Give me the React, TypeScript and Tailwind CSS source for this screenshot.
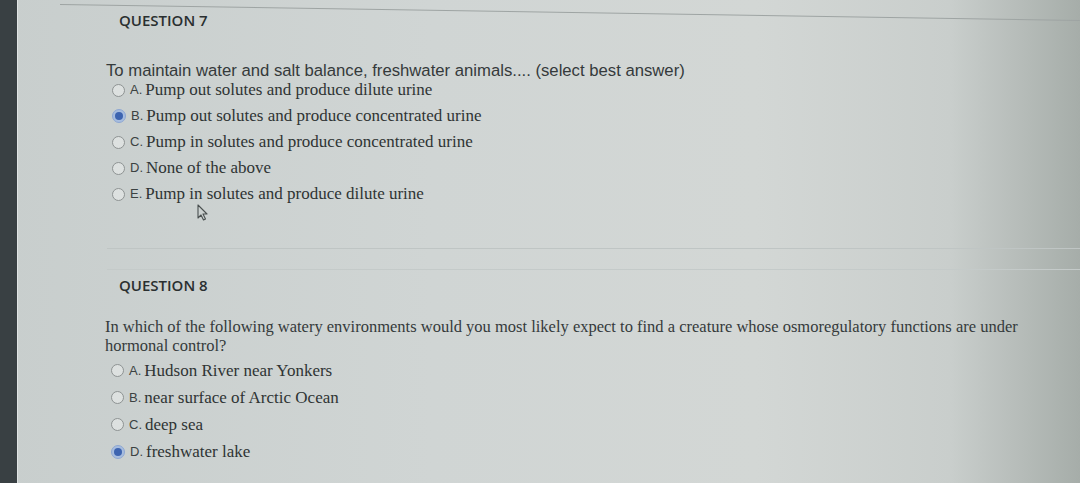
import React from "react";

type Opt = { letter: string; text: string; checked?: boolean };

const Q7_OPTS: Opt[] = [
  { letter: "A.", text: "Pump out solutes and produce dilute urine" },
  { letter: "B.", text: "Pump out solutes and produce concentrated urine", checked: true },
  { letter: "C.", text: "Pump in solutes and produce concentrated urine" },
  { letter: "D.", text: "None of the above" },
  { letter: "E.", text: "Pump in solutes and produce dilute urine" },
];

const Q8_OPTS: Opt[] = [
  { letter: "A.", text: "Hudson River near Yonkers" },
  { letter: "B.", text: "near surface of Arctic Ocean" },
  { letter: "C.", text: "deep sea" },
  { letter: "D.", text: "freshwater lake", checked: true },
];

function Radio({ checked }: { checked?: boolean }) {
  if (checked) {
    return (
      <span className="w-[14px] h-[14px] rounded-full bg-[#a7bddf] border border-[#8ea7d2] flex items-center justify-center shrink-0">
        <span className="w-[8px] h-[8px] rounded-full bg-[#3d64b0]" />
      </span>
    );
  }
  return <span className="w-[13px] h-[13px] rounded-full border border-[#8e9393] bg-[#dde1e0] shrink-0" />;
}

function Option({ o, h }: { o: Opt; h: string }) {
  return (
    <div className={"flex items-center pl-[6px] " + h}>
      <Radio checked={o.checked} />
      <span className="ml-[5px] text-[13px] text-[#3c4242] font-['Liberation_Sans',sans-serif]">{o.letter}</span>
      <span className="ml-[3px] text-[17px] text-[#2f3434] font-['Liberation_Serif',serif]">{o.text}</span>
    </div>
  );
}

export default function App() {
  return (
    <div className="w-[1080px] h-[483px] overflow-hidden flex bg-[linear-gradient(90deg,#c8cecd_0%,#d0d5d4_40%,#d3d7d5_70%,#c9cecc_88%,#a6ada9_100%)]">
      <div className="w-[18px] shrink-0 bg-[#394043] border-r border-[#dfe3e3]" />
      <div className="flex-1 flex flex-col">
        <div className="ml-[42px] mt-[4px] h-0 border-t border-[#9ea4a3] origin-left rotate-[0.9deg]" />
        <div className="pl-[101px] mt-[5px] leading-[20px] text-[15px] font-semibold text-[#2a2f30] font-['Open_Sans',sans-serif]">
          QUESTION 7
        </div>
        <div className="pl-[88px] mt-[31px] text-[16.7px] text-[#353a3b] font-['Liberation_Sans',sans-serif] leading-[20px]">
          To maintain water and salt balance, freshwater animals.... (select best answer)
        </div>
        <div className="pl-[88px] mt-[-4px] flex flex-col">
          {Q7_OPTS.map((o) => (
            <Option key={o.letter} o={o} h="h-[26px]" />
          ))}
        </div>
        <div className="pl-[178px] mt-[-3px] h-[18px]">
          <svg width="14" height="18" viewBox="0 0 14 18">
            <path d="M2 1 L2 14 L5 11 L7.5 16 L9.5 15 L7 10 L11 10 Z" fill="none" stroke="#4a5050" strokeWidth="1.1" strokeLinejoin="round" />
          </svg>
        </div>
        <div className="ml-[89px] mt-[26px] border-t border-[#bfc5c4]" />
        <div className="ml-[89px] mt-[20px] border-t border-[#c4cac9]" />
        <div className="pl-[101px] mt-[5px] leading-[20px] text-[15px] font-semibold text-[#2a2f30] font-['Open_Sans',sans-serif]">
          QUESTION 8
        </div>
        <div className="pl-[87px] mt-[22px] w-[1030px] text-[16.5px] text-[#353a3b] font-['Liberation_Serif',serif] leading-[19px]">
          In which of the following watery environments would you most likely expect to find a creature whose osmoregulatory functions are under hormonal control?
        </div>
        <div className="pl-[87px] mt-[2px] flex flex-col">
          {Q8_OPTS.map((o) => (
            <Option key={o.letter} o={o} h="h-[27px]" />
          ))}
        </div>
      </div>
    </div>
  );
}
